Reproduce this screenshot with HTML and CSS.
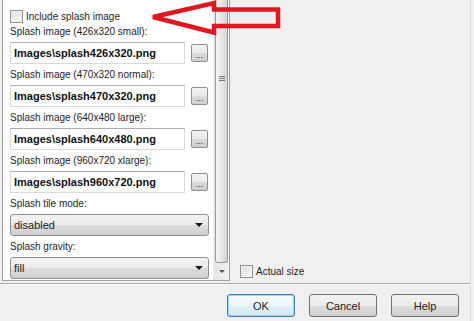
FILE: index.html
```html
<!DOCTYPE html>
<html>
<head>
    <link rel="stylesheet" href="styles.css">
</head>
<body>
    <div class="dialog">
        <div class="main">
            <div class="panel">
                <div class="props">
                    <label class="check-row"><span class="checkbox"></span>Include splash image</label>

                    <div class="field-group">
                        <div class="field-label">Splash image (426x320 small):</div>
                        <div class="field-row">
                            <div class="text-field">Images\splash426x320.png</div>
                            <button class="browse">...</button>
                        </div>
                    </div>
                    <div class="field-group">
                        <div class="field-label">Splash image (470x320 normal):</div>
                        <div class="field-row">
                            <div class="text-field">Images\splash470x320.png</div>
                            <button class="browse">...</button>
                        </div>
                    </div>
                    <div class="field-group">
                        <div class="field-label">Splash image (640x480 large):</div>
                        <div class="field-row">
                            <div class="text-field">Images\splash640x480.png</div>
                            <button class="browse">...</button>
                        </div>
                    </div>
                    <div class="field-group">
                        <div class="field-label">Splash image (960x720 xlarge):</div>
                        <div class="field-row">
                            <div class="text-field">Images\splash960x720.png</div>
                            <button class="browse">...</button>
                        </div>
                    </div>
                    <div class="field-group">
                        <div class="field-label">Splash tile mode:</div>
                        <div class="combo"><span>disabled</span><span class="combo-arrow"></span></div>
                    </div>
                    <div class="field-group">
                        <div class="field-label">Splash gravity:</div>
                        <div class="combo"><span>fill</span><span class="combo-arrow"></span></div>
                    </div>
                </div>
                <div class="scrollbar">
                    <div class="thumb"><span class="grip"></span></div>
                    <div class="scroll-down"><span class="scroll-arrow"></span></div>
                </div>
            </div>
            <div class="side">
                <label class="check-row"><span class="checkbox"></span>Actual size</label>
            </div>
        </div>

        <div class="separator"></div>

        <div class="buttons">
            <button class="dlg-button default">OK</button>
            <button class="dlg-button">Cancel</button>
            <button class="dlg-button">Help</button>
        </div>
    </div>

    <!-- red annotation arrow drawn over the dialog -->
    <svg class="annotation" width="474" height="40" viewBox="0 0 474 40">
        <polygon points="153,17 214,3 214,9.5 278,9.5 278,26 214,26 214,32.5" fill="none" stroke="#e2161f" stroke-width="4.5" stroke-linejoin="miter"/>
    </svg>
</body>
</html>
```

FILE: styles.css
```css
body {
    margin: 0;
    width: 474px;
    height: 321px;
    overflow: hidden;
    position: relative;
    background-color: #f0f0f0;
    font-family: "Liberation Sans", Arial, sans-serif;
    font-size: 10px;
    color: #1e1e1e;
}
.dialog {
    width: 470px;
    height: 321px;
    border-right: 1px solid #dcdcdc;
    display: flex;
    flex-direction: column;
}
.main {
    height: 283px;
    display: flex;
}
.panel {
    margin-left: 2px;
    height: 280px;
    display: flex;
    border: 1px solid #a0a0a0;
    border-top: none;
    overflow: hidden;
}
.props {
    width: 203px;
    padding: 9px 0 0 7px;
    background-color: #fff;
}
.check-row {
    display: flex;
    align-items: center;
    gap: 3px;
    height: 14px;
}
.checkbox {
    width: 11px;
    height: 11px;
    border: 1px solid #8e8f8f;
    background: linear-gradient(135deg, #dedede, #f8f8f8);
    box-shadow: inset 0 0 0 1px #f4f4f4;
}
.field-group {
    padding: 2px 0;
}
.field-label {
    height: 14px;
    line-height: 14px;
    margin-bottom: 3px;
}
.field-row {
    display: flex;
    align-items: center;
    gap: 6px;
}
.text-field {
    width: 170px;
    height: 20px;
    line-height: 20px;
    padding-left: 3px;
    border: 1px solid #d6d9de;
    border-top-color: #abadb3;
    font-weight: bold;
    font-size: 11px;
    color: #111;
    white-space: nowrap;
}
.browse {
    width: 17px;
    height: 18px;
    padding: 0;
    border: 1px solid #8e8f8f;
    border-radius: 2px;
    background: linear-gradient(#f4f4f4, #e9e9e9 50%, #dadada 51%, #cfcfcf);
    font-family: "Liberation Sans", Arial, sans-serif;
    font-size: 9px;
    line-height: 20px;
    color: #333;
}
.combo {
    width: 189px;
    height: 20px;
    border: 1px solid #8e8f8f;
    border-radius: 3px;
    background: linear-gradient(#f3f3f3, #ebebeb 50%, #dddddd 51%, #cfcfcf);
    display: flex;
    align-items: center;
    justify-content: space-between;
    padding: 0 5px 0 3px;
    font-size: 11px;
}
.combo-arrow {
    width: 0;
    height: 0;
    border-left: 4px solid transparent;
    border-right: 4px solid transparent;
    border-top: 4px solid #1a1a1a;
}
.scrollbar {
    width: 16px;
    background: linear-gradient(to right, #e4e4e4, #f2f2f2);
    border-left: 1px solid #eeeeee;
    box-sizing: border-box;
    display: flex;
    flex-direction: column;
}
.thumb {
    margin: 0 1px;
    height: 262px;
    border: 1px solid #9a9a9a;
    border-top: none;
    border-radius: 0 0 3px 3px;
    background: linear-gradient(to right, #f4f4f4, #e6e6e6 50%, #d4d4d4);
    display: flex;
    justify-content: center;
}
.grip {
    margin-top: 76px;
    width: 6px;
    height: 5px;
    background: repeating-linear-gradient(#777 0 1px, transparent 1px 2px);
}
.scroll-down {
    flex: 1;
    display: flex;
    align-items: center;
    justify-content: center;
}
.scroll-arrow {
    width: 0;
    height: 0;
    border-left: 3px solid transparent;
    border-right: 3px solid transparent;
    border-top: 3px solid #555;
}
.side {
    flex: 1;
    display: flex;
    align-items: flex-end;
    padding: 0 0 5px 10px;
}
.separator {
    height: 0;
    border-top: 1px solid #a8a8a8;
    border-bottom: 1px solid #ffffff;
}
.buttons {
    display: flex;
    justify-content: flex-end;
    gap: 14px;
    padding: 9px 11px 0 0;
}
.dlg-button {
    width: 68px;
    height: 23px;
    padding: 0;
    border: 1px solid #707070;
    border-radius: 3px;
    background: linear-gradient(#f2f2f2, #ebebeb 50%, #dddddd 51%, #cfcfcf);
    font-family: "Liberation Sans", Arial, sans-serif;
    font-size: 11px;
    color: #1e1e1e;
}
.dlg-button.default {
    border-color: #3c7fb1;
    box-shadow: inset 0 0 0 1px #9ad6f3;
    background: linear-gradient(#f6fbfe, #eef6fb 50%, #e2eef6 51%, #d6e7f2);
}
.annotation {
    position: absolute;
    top: 0;
    left: 0;
    pointer-events: none;
}
```
